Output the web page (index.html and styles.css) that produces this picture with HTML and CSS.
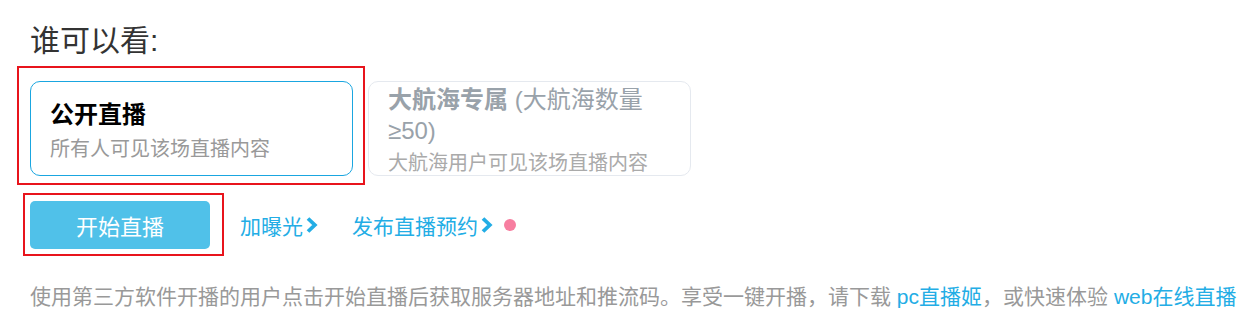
FILE: index.html
```html
<!DOCTYPE html>
<html lang="zh-CN">
<head>
<meta charset="utf-8">
<title>谁可以看</title>
<link rel="stylesheet" href="styles.css">
</head>
<body>
<div class="page">
  <div class="title">谁可以看:</div>
  <div class="cards">
    <div class="card card-active">
      <div class="card-title">公开直播</div>
      <div class="card-sub">所有人可见该场直播内容</div>
    </div>
    <div class="card card-disabled">
      <div class="card-title"><b>大航海专属</b> (大航海数量≥50)</div>
      <div class="card-sub">大航海用户可见该场直播内容</div>
    </div>
  </div>
  <div class="actions">
    <button class="start-btn">开始直播</button>
    <a class="link link-first">加曝光<svg class="chev" width="13" height="18" viewBox="0 0 13 18"><polyline points="3,2.5 9.8,9 3,15.5" fill="none" stroke="#23ade5" stroke-width="3.8"/></svg></a>
    <a class="link link-second">发布直播预约<svg class="chev" width="13" height="18" viewBox="0 0 13 18"><polyline points="3,2.5 9.8,9 3,15.5" fill="none" stroke="#23ade5" stroke-width="3.8"/></svg></a>
    <span class="dot"></span>
  </div>
  <div class="hint">使用第三方软件开播的用户点击开始直播后获取服务器地址和推流码。享受一键开播，请下载 <a class="hint-link">pc直播姬</a>，或快速体验 <a class="hint-link">web在线直播</a></div>
  <div class="mark mark-card"></div>
  <div class="mark mark-btn"></div>
</div>
</body>
</html>
```
FILE: styles.css
```css
* { box-sizing: border-box; }
html, body { margin: 0; padding: 0; background: #fff; }
body {
  font-family: "Liberation Sans", "Noto Sans CJK SC", sans-serif;
  width: 1259px;
  height: 326px;
  overflow: hidden;
}
.page {
  position: relative;
  padding: 21px 0 0 30px;
}
.title {
  font-size: 30px;
  line-height: 40px;
  color: #333;
}
.cards {
  display: flex;
  gap: 15px;
  margin-top: 20px;
}
.card {
  width: 323px;
  height: 95px;
  border-radius: 10px;
  border: 1px solid #e5e9ef;
  padding: 2px 19px 0;
  display: flex;
  flex-direction: column;
}
.card-active {
  border-color: #1aa6e0;
  padding-top: 17px;
}
.card-title {
  font-size: 24px;
  line-height: 31px;
  color: #000;
  font-weight: bold;
}
.card-sub {
  font-size: 20px;
  line-height: 30px;
  color: #999;
}
.card-active .card-sub { margin-top: 4px; }
.card-disabled .card-title { color: #99a2aa; font-weight: normal; }
.card-disabled .card-title b { font-weight: bold; }
.card-disabled .card-sub { color: #aaa; margin-top: 2px; }
.actions {
  display: flex;
  align-items: center;
  margin-top: 25px;
  height: 48px;
}
.start-btn {
  width: 180px;
  height: 48px;
  border: 0;
  border-radius: 5px;
  background: #50c1e9;
  color: #fff;
  font-family: inherit;
  font-size: 22px;
  padding: 0;
}
.link {
  color: #23ade5;
  font-size: 21px;
  display: flex;
  align-items: center;
}
.link-first { margin-left: 30px; }
.link-second { margin-left: 34px; }
.chev { margin-left: 2px; }
.dot {
  width: 12px;
  height: 12px;
  border-radius: 50%;
  background: #f77ea0;
  margin-left: 11px;
}
.hint {
  margin-top: 33px;
  font-size: 21px;
  line-height: 30px;
  color: #999;
  white-space: nowrap;
}
.hint-link { color: #23ade5; }
.mark {
  position: absolute;
  border: 2px solid #e8141c;
}
.mark-card { left: 17px; top: 66px; width: 348px; height: 119px; }
.mark-btn { left: 23px; top: 193px; width: 201px; height: 63px; }
```
